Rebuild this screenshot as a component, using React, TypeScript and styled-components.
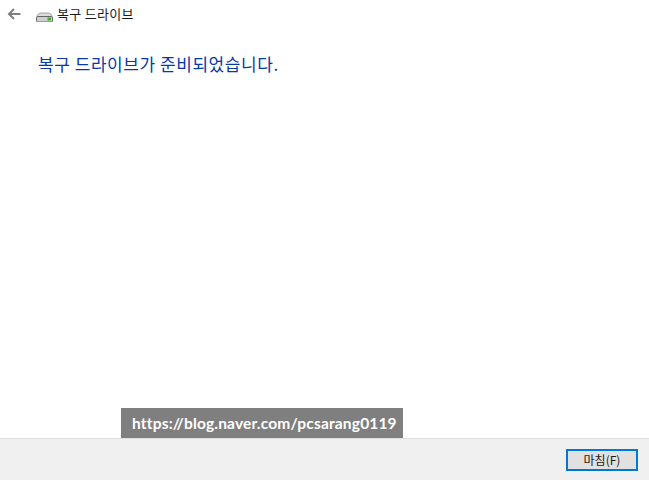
import React from "react";
import styled, { createGlobalStyle } from "styled-components";

const GlobalStyle = createGlobalStyle`
  html, body {
    margin: 0;
    padding: 0;
    background: #fff;
  }
  body {
    font-family: "Noto Sans CJK KR", "Liberation Sans", sans-serif;
  }
`;

const Page = styled.div`
  width: 649px;
  height: 480px;
  display: flex;
  flex-direction: column;
  overflow: hidden;
`;

const TitleBar = styled.div`
  height: 28px;
  display: flex;
  align-items: center;
  padding-left: 7px;
`;

const BackButton = styled.div`
  width: 14px;
  height: 14px;
  margin-right: 15px;
  display: flex;
`;

const DriveIcon = styled.div`
  width: 17px;
  height: 16px;
  margin-right: 4px;
  display: flex;
`;

const TitleText = styled.span`
  font-size: 13px;
  letter-spacing: 0.3px;
  line-height: 16px;
  color: #1a1a1a;
`;

const Content = styled.div`
  flex: 1;
  padding: 24px 0 0 38px;
  display: flex;
  flex-direction: column;
`;

const Heading = styled.h1`
  margin: 0;
  font-size: 17px;
  letter-spacing: 0.55px;
  line-height: 23px;
  font-weight: 400;
  color: #0539a6;
`;

const WatermarkRow = styled.div`
  margin-top: auto;
  padding-left: 121px;
  margin-left: -38px;
  display: flex;
`;

const Watermark = styled.div`
  width: 282px;
  height: 30px;
  background: #7f7f7f;
  color: #fff;
  font-family: "Lato", sans-serif;
  font-size: 15.5px;
  letter-spacing: 0.17px;
  font-weight: 700;
  line-height: 30px;
  padding-left: 11px;
  box-sizing: border-box;
  white-space: nowrap;
`;

const Footer = styled.div`
  height: 41px;
  background: #f0f0f0;
  border-top: 1px solid #dfdfdf;
  display: flex;
  align-items: center;
  justify-content: flex-end;
  padding-right: 11px;
`;

const FinishButton = styled.button`
  width: 72px;
  height: 22px;
  box-sizing: border-box;
  padding: 0;
  border: 2px solid #0078d7;
  background: #e1e1e1;
  color: #1a1a1a;
  font-family: inherit;
  font-size: 12px;
  line-height: 15px;
`;

const App = () => {
  return (
    <Page>
      <GlobalStyle />
      <TitleBar>
        <BackButton>
          <svg width="14" height="14" viewBox="0 0 14 14" fill="none">
            <path d="M2 7H13.5M7 2L2 7L7 12" stroke="#808080" strokeWidth="2" />
          </svg>
        </BackButton>
        <DriveIcon>
          <svg width="17" height="16" viewBox="0 0 17 16">
            <path d="M1 11C1 8.5 3 7 5 7H12C14 7 16 8.5 16 11Z" fill="#dcdcdc" stroke="#8f8f8f" strokeWidth=".8" />
            <rect x=".5" y="10.5" width="16" height="5.5" rx="1.2" fill="#cfcfcf" stroke="#666" />
            <rect x="11.5" y="11.5" width="3.5" height="3" fill="#3fae2a" />
          </svg>
        </DriveIcon>
        <TitleText>복구 드라이브</TitleText>
      </TitleBar>
      <Content>
        <Heading>복구 드라이브가 준비되었습니다.</Heading>
        <WatermarkRow>
          <Watermark>https://blog.naver.com/pcsarang0119</Watermark>
        </WatermarkRow>
      </Content>
      <Footer>
        <FinishButton>마침(F)</FinishButton>
      </Footer>
    </Page>
  );
};

export default App;
